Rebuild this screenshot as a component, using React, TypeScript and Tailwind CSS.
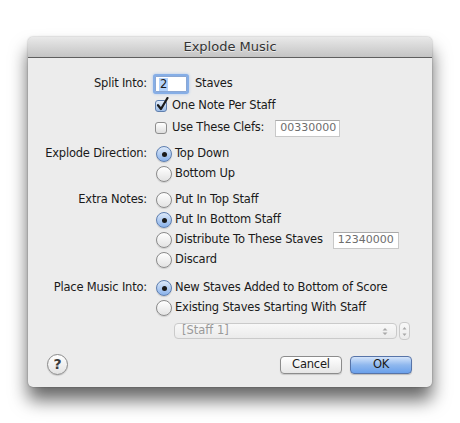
import React from "react";

const font = { fontFamily: '"DejaVu Sans", "Liberation Sans", sans-serif' };

function Checkbox({ checked }: { checked?: boolean }) {
  return (
    <span className="relative ml-[1px] mr-[5px] inline-block h-[12px] w-[12px] shrink-0">
      <span
        className={
          checked
            ? "absolute inset-0 rounded-[3px] border border-[#5f7fae] bg-gradient-to-b from-[#e2ecf9] to-[#9dbde8]"
            : "absolute inset-0 rounded-[3px] border border-[#8d8d8d] bg-gradient-to-b from-white to-[#dedede]"
        }
      />
      {checked && (
        <svg className="absolute left-[1px] top-[-3px]" width="13" height="14" viewBox="0 0 13 14">
          <path d="M2 8.2 L5 12 L11.5 1" fill="none" stroke="#1b1b1b" strokeWidth="2.2" strokeLinecap="round" strokeLinejoin="round" />
        </svg>
      )}
    </span>
  );
}

function Radio({ checked }: { checked?: boolean }) {
  return (
    <span
      className={
        checked
          ? "ml-[2px] mr-[3px] flex h-[16px] w-[16px] shrink-0 items-center justify-center rounded-full border border-[#5d7eb0] bg-gradient-to-b from-[#dde9f9] to-[#8ab2ea] shadow-[0_1px_1px_rgba(0,0,0,0.15)]"
          : "ml-[2px] mr-[3px] flex h-[16px] w-[16px] shrink-0 items-center justify-center rounded-full border border-[#8a8a8a] bg-gradient-to-b from-white to-[#e3e3e3] shadow-[0_1px_1px_rgba(0,0,0,0.12)]"
      }
    >
      {checked && <span className="h-[5px] w-[5px] rounded-full bg-[#1a1a1a]" />}
    </span>
  );
}

function Field({ value, w }: { value: string; w: string }) {
  return (
    <span
      className={`flex h-[17px] items-center border border-[#c8c8c8] border-t-[#a9a9a9] bg-white pl-[4px] text-[11px] tracking-normal text-[#6d6d6d] ${w}`}
    >
      {value}
    </span>
  );
}

function Group({ label, children, first }: { label: string; children: React.ReactNode; first?: string }) {
  return (
    <div className="flex">
      <div className={`flex w-[119px] shrink-0 items-center justify-end ${first ?? "h-[20px]"}`}>{label}</div>
      <div className="ml-[7px] flex flex-col">{children}</div>
    </div>
  );
}

function Option({ checked, children }: { checked?: boolean; children: React.ReactNode }) {
  return (
    <div className="flex h-[20px] items-center">
      <Radio checked={checked} />
      {children}
    </div>
  );
}

export default function App() {
  return (
    <div className="min-h-[423px] bg-white pl-[28px] pt-[37px] text-[11.5px] tracking-[-0.2px] text-[#1a1a1a]" style={font}>
      <div className="w-[404px] overflow-hidden rounded-[5px] bg-[#ececec] shadow-[0_13px_18px_rgba(0,0,0,0.6),0_0_2px_rgba(0,0,0,0.35)]">
        {/* title bar */}
        <div className="flex h-[21px] items-center justify-center border-b border-[#5e5e5e] bg-gradient-to-b from-[#e9e9e9] to-[#c4c4c4] text-[13px] tracking-normal text-[#333] [text-shadow:0_1px_0_rgba(255,255,255,0.6)]">
          Explode Music
        </div>

        <div className="pb-[12px] pt-[15px]">
          <Group label="Split Into:" first="h-[22px]">
            <div className="flex h-[22px] items-center">
              <span className="ml-[1px] flex h-[16px] w-[32px] items-center rounded-[1px] border border-[#8aa7d4] bg-white pl-[3px] shadow-[0_0_0_2px_#86aee6,0_0_3px_2px_#a9c6ef]">
                <span className="bg-[#b4d3fb] px-[1px] leading-[13px]">2</span>
              </span>
              <span className="ml-[8px]">Staves</span>
            </div>
            <div className="flex h-[22px] items-center">
              <Checkbox checked />
              One Note Per Staff
            </div>
            <div className="flex h-[22px] items-center">
              <Checkbox />
              <span>Use These Clefs:</span>
              <span className="ml-[11px]">
                <Field value="00330000" w="w-[65px]" />
              </span>
            </div>
          </Group>

          <div className="mt-[5px]">
            <Group label="Explode Direction:">
              <Option checked>Top Down</Option>
              <Option>Bottom Up</Option>
            </Group>
          </div>

          <div className="mt-[6px]">
            <Group label="Extra Notes:">
              <Option>Put In Top Staff</Option>
              <Option checked>Put In Bottom Staff</Option>
              <Option>
                <span>Distribute To These Staves</span>
                <span className="ml-[10px]">
                  <Field value="12340000" w="w-[66px]" />
                </span>
              </Option>
              <Option>Discard</Option>
            </Group>
          </div>

          <div className="mt-[8px]">
            <Group label="Place Music Into:">
              <Option checked>New Staves Added to Bottom of Score</Option>
              <Option>Existing Staves Starting With Staff</Option>
            </Group>
          </div>

          {/* disabled staff popup */}
          <div className="mt-[5px] flex h-[16px] items-center pl-[146px]">
            <div className="flex h-[16px] w-[223px] items-center justify-between rounded-[4px] border border-[#cacaca] bg-gradient-to-b from-[#f8f8f8] to-[#ebebeb] pl-[7px] pr-[8px] text-[11.5px] tracking-normal text-[#9a9a9a]">
              <span>[Staff 1]</span>
              <svg width="6" height="9" viewBox="0 0 6 9">
                <path d="M0.5 3.5 L3 1 L5.5 3.5 Z M0.5 5.5 L3 8 L5.5 5.5 Z" fill="#a8a8a8" />
              </svg>
            </div>
            <div className="ml-[2px] flex h-[18px] w-[11px] items-center justify-center rounded-[4px] border border-[#cacaca] bg-gradient-to-b from-[#f8f8f8] to-[#ebebeb]">
              <svg width="5" height="11" viewBox="0 0 5 11">
                <path d="M0.5 3.5 L2.5 1 L4.5 3.5 Z M0.5 7.5 L2.5 10 L4.5 7.5 Z" fill="#a8a8a8" />
              </svg>
            </div>
          </div>

          {/* bottom buttons */}
          <div className="mt-[15px] flex h-[21px] items-center pl-[19px] pr-[20px]">
            <span className="flex h-[21px] w-[21px] items-center justify-center rounded-full border border-[#8a8a8a] bg-gradient-to-b from-white to-[#e2e2e2] text-[14px] font-bold text-[#3a3a3a] shadow-[0_1px_1px_rgba(0,0,0,0.15)]">
              ?
            </span>
            <div className="ml-auto flex gap-[8px]">
              <span className="flex h-[18px] w-[62px] items-center justify-center rounded-[4px] border border-[#8c8c8c] bg-gradient-to-b from-white to-[#e6e6e6] shadow-[0_1px_1px_rgba(0,0,0,0.15)]">
                Cancel
              </span>
              <span className="flex h-[18px] w-[62px] items-center justify-center rounded-[4px] border border-[#5774a8] bg-gradient-to-b from-[#d4e4fa] via-[#8fb8ee] to-[#6aa0eb] shadow-[0_1px_1px_rgba(0,0,0,0.2)]">
                OK
              </span>
            </div>
          </div>
        </div>
      </div>
    </div>
  );
}
